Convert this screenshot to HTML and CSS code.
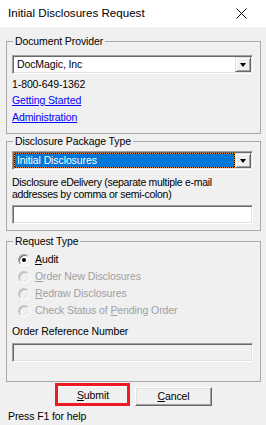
FILE: index.html
```html
<!DOCTYPE html>
<html>
<head>
<meta charset="utf-8">
<link rel="stylesheet" href="styles.css">
</head>
<body>
<div class="window">
  <div class="titlebar">
    <span class="title">Initial Disclosures Request</span>
    <svg class="close" width="11" height="11" viewBox="0 0 11 11"><path d="M0.5 0.5 L10.5 10.5 M10.5 0.5 L0.5 10.5" stroke="#000" stroke-width="1" fill="none"/></svg>
  </div>
  <div class="dialog">
    <fieldset class="group g1">
      <legend>Document Provider</legend>
      <div class="combo c1">
        <span class="combo-value">DocMagic, Inc</span>
        <span class="drop"><span class="arrow"></span></span>
      </div>
      <div class="line phone">1-800-649-1362</div>
      <a class="link l1" href="#">Getting Started</a>
      <a class="link l2" href="#">Administration</a>
    </fieldset>

    <fieldset class="group g2">
      <legend>Disclosure Package Type</legend>
      <div class="combo c2">
        <span class="combo-value selected">Initial Disclosures</span>
        <span class="drop"><span class="arrow"></span></span>
      </div>
      <div class="para">Disclosure eDelivery (separate multiple e-mail<br>addresses by comma or semi-colon)</div>
      <div class="textbox t1"></div>
    </fieldset>

    <fieldset class="group g3">
      <legend>Request Type</legend>
      <div class="radios">
        <div class="radio-row"><span class="radio checked"><span class="dot"></span></span><span class="rlabel"><u>A</u>udit</span></div>
        <div class="radio-row disabled"><span class="radio"></span><span class="rlabel"><u>O</u>rder New Disclosures</span></div>
        <div class="radio-row disabled"><span class="radio"></span><span class="rlabel"><u>R</u>edraw Disclosures</span></div>
        <div class="radio-row disabled"><span class="radio"></span><span class="rlabel">Check Status of <u>P</u>ending Order</span></div>
      </div>
      <div class="line reflabel">Order Reference Number</div>
      <div class="textbox t2 disabled-box"></div>
    </fieldset>

    <div class="buttons">
      <span class="highlight"><span class="btn btn-submit"><u>S</u>ubmit</span></span>
      <span class="btn btn-cancel"><u>C</u>ancel</span>
    </div>
    <div class="line help">Press F1 for help</div>
  </div>
</div>
</body>
</html>
```

FILE: styles.css
```css
html, body {
  margin: 0;
  padding: 0;
}
body {
  width: 266px;
  height: 425px;
  background: #f0f0f0;
  font-family: "Liberation Sans", Arial, sans-serif;
  font-size: 10.5px;
  letter-spacing: -0.1px;
  color: #000;
  overflow: hidden;
}
.window {
  width: 266px;
  height: 425px;
  display: flex;
  flex-direction: column;
}
.titlebar {
  height: 27px;
  background: #fff;
  display: flex;
  align-items: center;
  justify-content: space-between;
  padding: 0 19px 0 8px;
  box-sizing: border-box;
}
.title {
  font-size: 11.6px;
  letter-spacing: 0;
  line-height: 14px;
  margin-top: -1px;
}
.close {
  display: block;
  margin-top: -1px;
}
.dialog {
  padding-top: 8px;
  display: flex;
  flex-direction: column;
}
.group {
  margin: 0 5px 0 6px;
  padding: 0 7px 0 5px;
  border: 1px solid #a8a8a8;
  min-inline-size: 0;
}
.group legend {
  padding: 0 2px;
  margin-left: 1px;
  line-height: 13px;
  font-size: 10.5px;
}
.g1 { padding-bottom: 9px; }
.g2 { margin-top: 1px; padding-bottom: 6px; }
.g3 { margin-top: 4px; padding-bottom: 19px; }

.combo, .textbox {
  width: 241px;
  height: 19px;
  box-sizing: border-box;
  border: 1px solid;
  border-color: #a0a0a0 #fff #fff #a0a0a0;
  box-shadow: inset 1px 1px #696969, inset -1px -1px #e3e3e3;
  background: #fff;
}
.combo {
  padding: 1px;
  display: flex;
  align-items: stretch;
}
.c1 { margin-top: 7px; }
.c2 { margin-top: 3px; }
.combo-value {
  flex: 1;
  padding-left: 3px;
  line-height: 15px;
  white-space: nowrap;
}
.combo-value.selected {
  color: #fff;
  padding-left: 2px;
  border: 1px dotted #ff8a1c;
  background: linear-gradient(#0078d7, #0078d7) padding-box, linear-gradient(#000, #000) border-box;
  line-height: 13px;
}
.drop {
  width: 16px;
  box-sizing: border-box;
  background: #f0f0f0;
  border: 1px solid;
  border-color: #e3e3e3 #696969 #696969 #e3e3e3;
  box-shadow: inset 1px 1px #fff, inset -1px -1px #a0a0a0;
  display: flex;
  align-items: center;
  justify-content: center;
}
.arrow {
  width: 0;
  height: 0;
  border-left: 3.5px solid transparent;
  border-right: 3.5px solid transparent;
  border-top: 4px solid #000;
  margin-top: 1px;
}
.line {
  line-height: 13px;
  white-space: nowrap;
}
.phone { margin-top: 4px; }
.link {
  display: block;
  width: fit-content;
  line-height: 13px;
  color: #0000ff;
  text-decoration: underline;
}
.l1 { margin-top: 3px; }
.l2 { margin-top: 4px; }
.para {
  margin-top: 6px;
  line-height: 12px;
  white-space: nowrap;
  letter-spacing: -0.3px;
}
.t1 { margin-top: 5px; }
.t2 { margin-top: 5px; }
.disabled-box { background: #f0f0f0; }

.radios {
  margin-top: 3px;
  display: flex;
  flex-direction: column;
}
.radio-row {
  height: 17px;
  display: flex;
  align-items: center;
  padding-left: 6px;
}
.radio {
  width: 12px;
  height: 12px;
  box-sizing: border-box;
  border-radius: 50%;
  border: 1px solid;
  border-color: #a0a0a0 #fff #fff #a0a0a0;
  box-shadow: inset 1px 1px #696969, inset -1px -1px #e3e3e3;
  background: #fff;
  display: flex;
  align-items: center;
  justify-content: center;
  margin-right: 5px;
}
.radio-row.disabled .radio {
  background: #f0f0f0;
  border-color: #c8c8c8 #fff #fff #c8c8c8;
  box-shadow: inset 1px 1px #b4b4b4, inset -1px -1px #e3e3e3;
}
.dot {
  width: 4px;
  height: 4px;
  border-radius: 50%;
  background: #000;
}
.rlabel {
  line-height: 13px;
  white-space: nowrap;
}
.radio-row.disabled .rlabel {
  color: #a0a0a0;
}
.reflabel { margin-top: 6px; }

.buttons {
  margin-top: 1px;
  margin-left: 55px;
  display: flex;
  align-items: flex-start;
}
.highlight {
  display: block;
  border: 3px solid #ed1c24;
}
.btn {
  display: flex;
  align-items: center;
  justify-content: center;
  box-sizing: border-box;
  background: #f0f0f0;
  line-height: 13px;
}
.btn-submit {
  width: 69px;
  height: 17px;
  border-top: 1px solid #fff;
  border-left: 1px solid #fff;
}
.btn-cancel {
  width: 77px;
  height: 19px;
  margin-left: 5px;
  margin-top: 4px;
  border: 1px solid;
  border-color: #fff #696969 #696969 #fff;
  box-shadow: inset -1px -1px #a0a0a0, inset 1px 1px #e3e3e3;
}
.help {
  margin-top: 4px;
  padding-left: 8px;
}
```
